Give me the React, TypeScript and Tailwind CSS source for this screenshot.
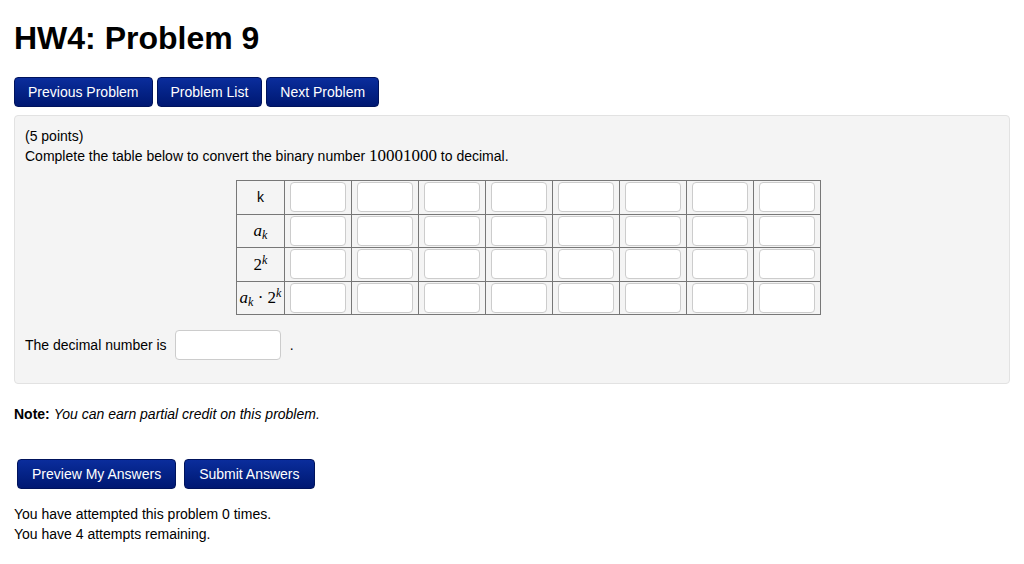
import React from "react";

const navButton =
  "h-[30px] rounded-[4px] border border-[#00135c] bg-gradient-to-b from-[#0b2d9c] to-[#001872] px-[13px] text-[14px] leading-none text-white";

function AnswerBox({ className = "" }: { className?: string }) {
  return (
    <input
      type="text"
      className={`h-[30px] rounded-[4px] border border-[#cccccc] bg-white outline-none ${className}`}
    />
  );
}

const rowLabels: React.ReactNode[] = [
  <span className="font-['Liberation_Sans',sans-serif] text-[14px]">k</span>,
  <span className="font-['Liberation_Serif',serif] text-[17px] italic">
    a<sub className="text-[12px]">k</sub>
  </span>,
  <span className="font-['Liberation_Serif',serif] text-[17px]">
    2<sup className="text-[12px] italic">k</sup>
  </span>,
  <span className="font-['Liberation_Serif',serif] text-[17px] whitespace-nowrap">
    <i>a</i>
    <sub className="text-[12px] italic">k</sub> · 2<sup className="text-[12px] italic">k</sup>
  </span>,
];

export default function App() {
  const columns = Array.from({ length: 8 }, (_, i) => i);

  return (
    <div className="min-h-[564px] bg-white px-[14px] font-['Liberation_Sans',Arial,sans-serif] text-[14px] text-black">
      <h1 className="pt-[19px] text-[32px] font-bold leading-[38px]">HW4: Problem 9</h1>

      <div className="mt-[20px] flex gap-[4px]">
        <button className={navButton}>Previous Problem</button>
        <button className={navButton}>Problem List</button>
        <button className={navButton}>Next Problem</button>
      </div>

      {/* Problem panel */}
      <div className="mt-[8px] rounded-[4px] border border-[#e2e2e2] bg-[#f4f4f4] px-[10px] pb-[23px] pt-[10px]">
        <p className="leading-[20px]">(5 points)</p>
        <p className="leading-[20px]">
          Complete the table below to convert the binary number{" "}
          <span className="font-['Liberation_Serif',serif] text-[17px]">10001000</span> to decimal.
        </p>

        <table className="ml-[211px] mt-[14px] w-[585px] table-fixed border-collapse border border-[#444]">
          <tbody>
            {rowLabels.map((label, r) => (
              <tr key={r} className="h-[33.5px]">
                <td className="w-[48px] border border-[#777] p-0 text-center leading-none">{label}</td>
                {columns.map((c) => (
                  <td key={c} className="border border-[#777] px-[5px] py-[1px]">
                    <AnswerBox className="block w-[56px]" />
                  </td>
                ))}
              </tr>
            ))}
          </tbody>
        </table>

        <div className="mt-[15px] flex items-center">
          <span>The decimal number is</span>
          <AnswerBox className="ml-[8px] w-[106px]" />
          <span className="ml-[9px]">.</span>
        </div>
      </div>

      <p className="mt-[20px] leading-[20px]">
        <b>Note:</b> <i>You can earn partial credit on this problem.</i>
      </p>

      <div className="ml-[3px] mt-[35px] flex gap-[8px]">
        <button className={`${navButton} px-[14px]`}>Preview My Answers</button>
        <button className={`${navButton} px-[14px]`}>Submit Answers</button>
      </div>

      <div className="mt-[15px] leading-[20px]">
        <p>You have attempted this problem 0 times.</p>
        <p>You have 4 attempts remaining.</p>
      </div>
    </div>
  );
}
